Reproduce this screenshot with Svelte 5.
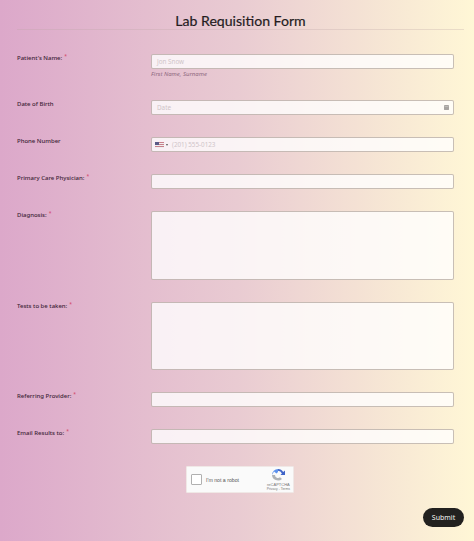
<script lang="ts">
  const fields = [
    { label: "Patient's Name:", req: true, placeholder: "Jon Snow", hint: "First Name, Surname" },
    { label: "Date of Birth", placeholder: "Date", date: true },
    { label: "Phone Number", placeholder: "(201) 555-0123", phone: true },
    { label: "Primary Care Physician:", req: true },
    { label: "Diagnosis:", req: true, area: true },
    { label: "Tests to be taken:", req: true, area: true },
    { label: "Referring Provider:", req: true },
    { label: "Email Results to:", req: true }
  ];
</script>

<main class="page">
  <h1>Lab Requisition Form</h1>

  <form class="fields" on:submit|preventDefault>
    {#each fields as f}
      <div class="row">
        <div class="label">{f.label}{#if f.req}<span class="req">*</span>{/if}</div>
        <div class="control">
          {#if f.area}
            <textarea></textarea>
          {:else if f.phone}
            <div class="box">
              <svg class="flag" width="9" height="6" viewBox="0 0 9 6">
                <rect width="9" height="6" fill="#c9808c" />
                <rect y="1" width="9" height="1" fill="#eee" />
                <rect y="3" width="9" height="1" fill="#eee" />
                <rect y="5" width="9" height="1" fill="#eee" />
                <rect width="4" height="3" fill="#5a5a86" />
              </svg>
              <span class="caret"></span>
              <span class="ph">{f.placeholder}</span>
            </div>
          {:else}
            <div class="box">
              <span class="ph">{f.placeholder ?? ""}</span>
              {#if f.date}
                <svg class="cal" width="5" height="5" viewBox="0 0 6 6">
                  <rect width="6" height="6" rx="0.5" fill="#a8a4a0" />
                  <rect x="0.8" y="1.6" width="4.4" height="0.5" fill="#ddd" />
                </svg>
              {/if}
            </div>
          {/if}
          {#if f.hint}<div class="hint">{f.hint}</div>{/if}
        </div>
      </div>
    {/each}

    <div class="captcha-wrap">
      <div class="captcha">
        <span class="check"></span>
        <span class="robot">I'm not a robot</span>
        <div class="brand">
          <svg width="14" height="14" viewBox="0 0 14 14">
            <path d="M7 1a6 6 0 0 1 5.2 3L14 2.5V7H9.5l1.4-1.6A4.3 4.3 0 0 0 7 2.8z" fill="#3f64c8" />
            <path d="M1 7a6 6 0 0 1 6-6v3L5.5 5.6 3 3.5z" fill="#5c92ee" />
            <path d="M1 7h3a3 3 0 0 0 5 2.2L11 11A6 6 0 0 1 1 7z" fill="#aeb1b5" />
          </svg>
          <span class="cap">reCAPTCHA</span>
          <span class="terms">Privacy - Terms</span>
        </div>
      </div>
    </div>

    <div class="actions">
      <button type="submit">Submit</button>
    </div>
  </form>
</main>

<style>
  :global(body) {
    margin: 0;
    font-family: "Noto Sans", sans-serif;
  }

  .page {
    box-sizing: border-box;
    height: 541px;
    padding: 0 10px 0 17px;
    overflow: hidden;
    background: linear-gradient(90deg, #dca8ca 0%, #e9cbd2 50%, #fff7d6 100%);
  }

  h1 {
    margin: 0;
    height: 30px;
    box-sizing: border-box;
    padding-top: 12px;
    border-bottom: 1px solid rgba(190, 165, 165, 0.3);
    font-family: "Lato", sans-serif;
    font-size: 14.1px;
    line-height: 18px;
    font-weight: 400;
    -webkit-text-stroke: 0.2px #241c1e;
    text-align: center;
    color: #241c1e;
  }

  .fields {
    display: flex;
    flex-direction: column;
    gap: 22px;
    padding-top: 24px;
  }

  .row {
    display: grid;
    grid-template-columns: 134px 303px;
  }

  .label {
    font-family: "Noto Sans", sans-serif;
    font-size: 6px;
    line-height: 8px;
    font-weight: 500;
    color: #3d2436;
  }

  .req {
    margin-left: 2px;
    font-size: 5px;
    line-height: 0;
    vertical-align: 2px;
    color: #d4476a;
  }

  .box,
  textarea {
    display: flex;
    align-items: center;
    box-sizing: border-box;
    width: 303px;
    height: 15px;
    padding: 0 5px;
    border: 1px solid rgba(110, 90, 75, 0.38);
    border-radius: 2px;
    background: rgba(255, 255, 255, 0.78);
  }

  textarea {
    display: block;
    height: 68.5px;
    margin: 0;
    resize: none;
    outline: none;
  }

  .ph {
    flex: 1;
    font-family: "Noto Sans", sans-serif;
    font-size: 6.3px;
    color: #cfc4c8;
  }

  .flag {
    margin-left: -2px;
    margin-right: 2px;
  }

  .caret {
    width: 0;
    height: 0;
    margin-right: 4px;
    border-left: 1.5px solid transparent;
    border-right: 1.5px solid transparent;
    border-top: 2px solid #555;
  }

  .cal {
    margin-right: -1px;
  }

  .hint {
    margin-top: 1px;
    height: 8px;
    font-family: "Noto Sans", sans-serif;
    font-size: 6px;
    line-height: 8px;
    font-style: italic;
    color: #8f6a80;
  }

  .captcha-wrap {
    display: flex;
    padding-left: 169px;
  }

  .captcha {
    display: flex;
    align-items: center;
    box-sizing: border-box;
    width: 108px;
    height: 27px;
    padding: 0 3px 0 4px;
    background: #fafafa;
    border: 1px solid #f0e8e6;
    border-radius: 1px;
  }

  .check {
    box-sizing: border-box;
    width: 11px;
    height: 11px;
    border: 1px solid #b0b0b0;
    border-radius: 1px;
    background: #fff;
  }

  .robot {
    flex: 1;
    margin-left: 4px;
    font-family: "Liberation Sans", sans-serif;
    font-size: 5.2px;
    color: #555;
  }

  .brand {
    display: flex;
    flex-direction: column;
    align-items: center;
    font-family: "Liberation Sans", sans-serif;
    color: #777;
  }

  .cap {
    font-size: 4px;
    line-height: 5px;
  }

  .terms {
    font-size: 3.4px;
    line-height: 4px;
  }

  .actions {
    display: flex;
    justify-content: flex-end;
    margin-top: -7px;
  }

  button {
    width: 41px;
    height: 19px;
    padding: 0;
    border: 0;
    border-radius: 10px;
    background: #22211f;
    color: #f7f6f2;
    font-family: "Noto Sans", sans-serif;
    font-size: 7px;
    font-weight: 400;
    cursor: pointer;
  }
</style>
